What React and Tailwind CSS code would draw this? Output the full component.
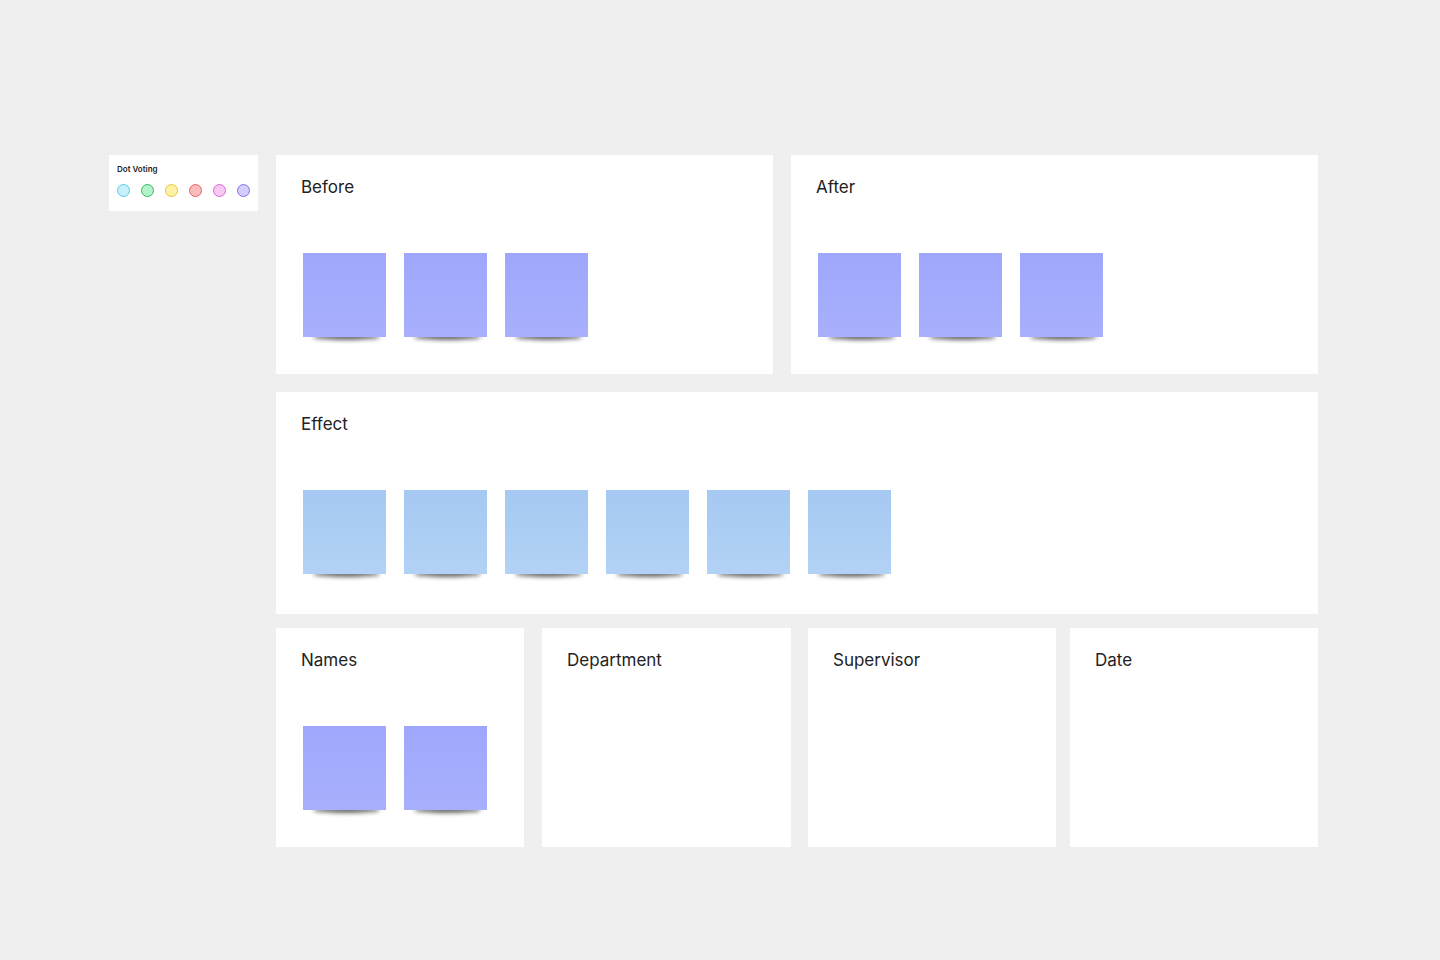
const F = { fontFamily: "Inter, 'Noto Sans', sans-serif" };

function Sticky({ blue }) {
  return (
    <div className="relative w-[83px] h-[84px]">
      <div className="absolute left-[10px] right-[6px] bottom-[-3px] h-[6px] rounded-[50%] bg-black/60 blur-[2px]" />
      <div className={`relative w-full h-full ${blue ? "bg-gradient-to-b from-[#a5c9f2] to-[#b2d2f5]" : "bg-gradient-to-b from-[#9ea7fb] to-[#a8b0fd]"}`} />
    </div>
  );
}

function Frame({ title, n, blue, className }) {
  return (
    <div className={`bg-white pl-[25px] pt-[21px] ${className}`}>
      <div className="text-[17px] text-[#222] leading-[22px]">{title}</div>
      {n > 0 && (
        <div className="flex gap-[18px] mt-[55px] pl-[2px]">
          {Array.from({ length: n }).map((_, i) => <Sticky key={i} blue={blue} />)}
        </div>
      )}
    </div>
  );
}

export default function App() {
  const dots = [
    ["#c8f0fb", "#5ec8e6"], ["#b5f3cc", "#32b865"], ["#fdf1a8", "#e5c83a"],
    ["#fcbcbc", "#e06565"], ["#f9c8f2", "#d36ad0"], ["#d3cdfc", "#7f74e6"],
  ];
  return (
    <div className="w-[1440px] h-[960px] bg-[#efefef] flex pl-[109px] pt-[155px] gap-[18px]" style={F}>
      <div className="w-[149px] h-[56px] bg-white px-[8px] pt-[8px]">
        <div className="text-[8px] font-semibold text-[#222]">Dot Voting</div>
        <div className="flex gap-[11px] mt-[9px]">
          {dots.map(([b, c], i) => (
            <div key={i} className="w-[13px] h-[13px] rounded-full border" style={{ background: b, borderColor: c }} />
          ))}
        </div>
      </div>
      <div className="w-[1042px] flex flex-col">
        <div className="flex gap-[18px] h-[219px]">
          <Frame title="Before" n={3} className="w-[497px]" />
          <Frame title="After" n={3} className="w-[527px]" />
        </div>
        <Frame title="Effect" n={6} blue className="h-[222px] mt-[18px]" />
        <div className="flex mt-[14px] h-[219px]">
          <Frame title="Names" n={2} className="w-[248px]" />
          <Frame title="Department" n={0} className="w-[249px] ml-[18px]" />
          <Frame title="Supervisor" n={0} className="w-[248px] ml-[17px]" />
          <Frame title="Date" n={0} className="w-[248px] ml-[14px]" />
        </div>
      </div>
    </div>
  );
}
